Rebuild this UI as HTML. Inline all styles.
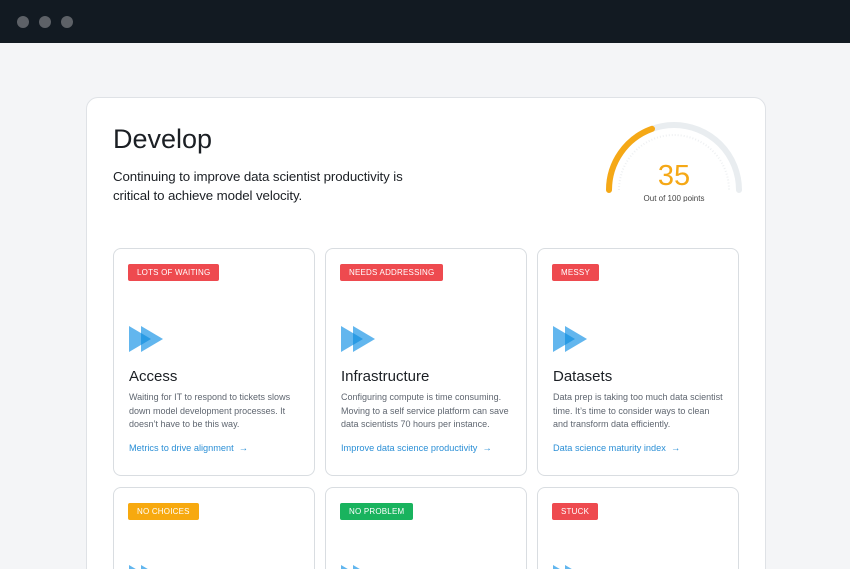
<!DOCTYPE html>
<html style="width:850px;height:569px;overflow:hidden"><head><style>
*{margin:0;padding:0;box-sizing:border-box}
body{width:850px;height:569px;overflow:hidden;background:#f4f5f7;font-family:"Liberation Sans",sans-serif;position:relative}
.top{position:absolute;left:0;top:0;width:850px;height:43px;background:#121a22}
.dot{position:absolute;top:16px;width:12px;height:12px;border-radius:50%;background:#5d6167}
.main{position:absolute;left:86px;top:97px;width:680px;height:500px;background:#fff;border:1px solid #dfe2e6;border-radius:12px}
h1{position:absolute;left:113px;top:124px;font-size:27px;font-weight:400;color:#1b1f24}
.sub{position:absolute;left:113px;top:167px;font-size:13.3px;line-height:19px;color:#1b1f24;width:300px;letter-spacing:-0.1px}
.card{position:absolute;width:202px;height:228px;background:#fff;border:1px solid #d9dde1;border-radius:8px}
.tag{position:absolute;left:14px;top:15px;height:17px;padding:0 9px;font-size:8px;line-height:17px;color:#fff;border-radius:2px;letter-spacing:.2px}
.ic{position:absolute;left:15px;top:77px}
.ct{position:absolute;left:15px;top:119px;font-size:15px;color:#1b1f24}
.cd{position:absolute;left:15px;top:142px;width:172px;font-size:9px;line-height:13.5px;color:#5f6670}
.cl{position:absolute;left:15px;top:194px;font-size:9.2px;color:#2b8fd6}
</style></head><body>
<div class="top"><div class="dot" style="left:17px"></div><div class="dot" style="left:39px"></div><div class="dot" style="left:61px"></div></div>
<div class="main"></div>
<h1>Develop</h1>
<div class="sub">Continuing to improve data scientist productivity is critical to achieve model velocity.</div>
<svg style="position:absolute;left:595px;top:112px" width="160" height="90">
<path d="M14 78 A65 65 0 0 1 144 78" fill="none" stroke="#e9edf0" stroke-width="6" stroke-linecap="round"/>
<path d="M24 78 A55 55 0 0 1 134 78" fill="none" stroke="#eef0f2" stroke-width="2" stroke-dasharray="1 2"/>
<path d="M14 78 A65 65 0 0 1 57 16.8" fill="none" stroke="#f5a816" stroke-width="6" stroke-linecap="round"/>
<text x="79" y="73" text-anchor="middle" font-family="Liberation Sans" font-size="29" fill="#f5a816">35</text>
<text x="79" y="89" text-anchor="middle" font-family="Liberation Sans" font-size="8" fill="#444">Out of 100 points</text>
</svg>

<div class="card" style="left:113px;top:248px"><div class="tag" style="background:#ee4a4f">LOTS OF WAITING</div>
<svg class="ic" width="34" height="28"><path d="M0 0 L22 13 L0 26Z" fill="#62b6ee"/><path d="M12 0 L34 13 L12 26Z" fill="#62b6ee"/><path d="M12 7 L22 13 L12 19Z" fill="#2a9be4"/></svg>
<div class="ct">Access</div><div class="cd">Waiting for IT to respond to tickets slows down model development processes. It doesn’t have to be this way.</div><div class="cl">Metrics to drive alignment &nbsp;→</div></div>

<div class="card" style="left:325px;top:248px"><div class="tag" style="background:#ee4a4f">NEEDS ADDRESSING</div>
<svg class="ic" width="34" height="28"><path d="M0 0 L22 13 L0 26Z" fill="#62b6ee"/><path d="M12 0 L34 13 L12 26Z" fill="#62b6ee"/><path d="M12 7 L22 13 L12 19Z" fill="#2a9be4"/></svg>
<div class="ct">Infrastructure</div><div class="cd">Configuring compute is time consuming. Moving to a self service platform can save data scientists 70 hours per instance.</div><div class="cl">Improve data science productivity &nbsp;→</div></div>

<div class="card" style="left:537px;top:248px"><div class="tag" style="background:#ee4a4f">MESSY</div>
<svg class="ic" width="34" height="28"><path d="M0 0 L22 13 L0 26Z" fill="#62b6ee"/><path d="M12 0 L34 13 L12 26Z" fill="#62b6ee"/><path d="M12 7 L22 13 L12 19Z" fill="#2a9be4"/></svg>
<div class="ct">Datasets</div><div class="cd">Data prep is taking too much data scientist time. It’s time to consider ways to clean and transform data efficiently.</div><div class="cl">Data science maturity index &nbsp;→</div></div>

<div class="card" style="left:113px;top:487px"><div class="tag" style="background:#f7a90f">NO CHOICES</div>
<svg class="ic" width="34" height="28"><path d="M0 0 L22 13 L0 26Z" fill="#62b6ee"/><path d="M12 0 L34 13 L12 26Z" fill="#62b6ee"/></svg></div>
<div class="card" style="left:325px;top:487px"><div class="tag" style="background:#19b35e">NO PROBLEM</div>
<svg class="ic" width="34" height="28"><path d="M0 0 L22 13 L0 26Z" fill="#62b6ee"/><path d="M12 0 L34 13 L12 26Z" fill="#62b6ee"/></svg></div>
<div class="card" style="left:537px;top:487px"><div class="tag" style="background:#ee4a4f">STUCK</div>
<svg class="ic" width="34" height="28"><path d="M0 0 L22 13 L0 26Z" fill="#62b6ee"/><path d="M12 0 L34 13 L12 26Z" fill="#62b6ee"/></svg></div>
</body></html>
